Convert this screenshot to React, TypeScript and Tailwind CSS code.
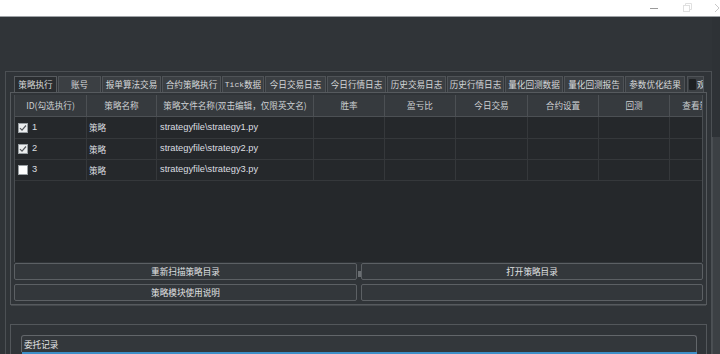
import React from "react";

const cjk = '"Noto Sans CJK SC", "Noto Sans", sans-serif';

const tabs = [
  { label: "策略执行", w: 43, active: true },
  { label: "账号", w: 43 },
  { label: "报单算法交易", w: 59 },
  { label: "合约策略执行", w: 59 },
  { label: "Tick数据", w: 42, mono: true },
  { label: "今日交易日志", w: 61 },
  { label: "今日行情日志", w: 59 },
  { label: "历史交易日志", w: 59 },
  { label: "历史行情日志", w: 57 },
  { label: "量化回测数据", w: 58 },
  { label: "量化回测报告", w: 60 },
  { label: "参数优化结果", w: 60 },
];

const columns = [
  { label: "ID(勾选执行)", w: 72 },
  { label: "策略名称", w: 70 },
  { label: "策略文件名称(双击编辑，仅限英文名)", w: 157 },
  { label: "胜率", w: 71 },
  { label: "盈亏比", w: 71 },
  { label: "今日交易", w: 72 },
  { label: "合约设置", w: 71 },
  { label: "回测", w: 71 },
  { label: "查看策略", w: 60 },
];

const rows = [
  { id: 1, checked: true, name: "策略", file: "strategyfile\\strategy1.py", h: "h-[22px]" },
  { id: 2, checked: true, name: "策略", file: "strategyfile\\strategy2.py", h: "h-[21px]" },
  { id: 3, checked: false, name: "策略", file: "strategyfile\\strategy3.py", h: "h-[21px]" },
];

const CheckBox = ({ checked }: { checked: boolean }) => (
  <span
    className={
      "w-[10px] h-[10px] flex items-center justify-center border border-[#9aa0a4] " +
      (checked ? "bg-[#eceeef]" : "bg-white")
    }
  >
    {checked && (
      <svg width="8" height="8" viewBox="0 0 8 8">
        <path d="M1 4.2 L3 6.2 L7 1.5" stroke="#55595d" strokeWidth="1.2" fill="none" />
      </svg>
    )}
  </span>
);

const Button = ({ label, className }: { label?: string; className: string }) => (
  <div
    className={
      "h-[17px] flex items-center justify-center rounded-[2px] border border-[#5c6064] bg-[#33373b] text-[#e2e4e6] text-[8.6px] " +
      className
    }
    style={{ fontFamily: cjk }}
  >
    {label}
  </div>
);

export default function App() {
  return (
    <div
      className="w-[720px] h-[354px] overflow-hidden bg-[#303438] flex flex-col"
      style={{ fontFamily: cjk }}
    >
      {/* TITLE BAR */}
      <div className="h-[16px] bg-white flex items-center justify-end shrink-0">
        <svg width="10" height="10" viewBox="0 0 10 10" className="mr-[23px]">
          <path d="M1 5.5 H9" stroke="#9a9a9a" strokeWidth="1" />
        </svg>
        <svg width="10" height="10" viewBox="0 0 10 10" className="mr-[22px]">
          <rect x="1.5" y="2.5" width="6" height="6" stroke="#e0e0e0" fill="none" />
          <path d="M3.5 2.5 V0.5 H9.5 V6.5 H7.5" stroke="#e0e0e0" fill="none" />
        </svg>
        <svg width="6" height="10" viewBox="0 0 6 10">
          <path d="M1 1 L5 5 L1 9" stroke="#c8c8c8" strokeWidth="1" fill="none" />
        </svg>
      </div>
      <div className="h-[1px] bg-[#9ea2a6] shrink-0" />

      <div className="flex flex-1 min-h-0">
        {/* MAIN AREA */}
        <div className="w-[712px] flex flex-col pl-[5px] pt-[54px]">
          <div className="flex-1 flex flex-col border-l border-t border-r border-[#4c5054] pl-[4px] pr-[4px] pt-[4px]">
            {/* TAB BAR */}
            <div className="h-[16px] flex gap-[1px] pl-[4px] shrink-0 overflow-hidden">
              {tabs.map((t) => (
                <div
                  key={t.label}
                  className={
                    "h-[16px] shrink-0 flex items-center justify-center border border-b-0 text-[8.6px] text-[#d6d8da] " +
                    (t.active ? "bg-[#2a2d30] border-[#575b5f]" : "bg-[#3b3f43] border-[#4f5357]")
                  }
                  style={{ width: t.w }}
                >
                  {t.mono ? (
                    <>
                      <span style={{ fontFamily: '"Liberation Mono", monospace' }} className="text-[8px]">
                        Tick
                      </span>
                      数据
                    </>
                  ) : (
                    t.label
                  )}
                </div>
              ))}
              <div className="ml-[1px] h-[16px] w-[17px] shrink-0 flex items-center bg-[#3b3f43] border border-b-0 border-[#4f5357] overflow-hidden">
                <span className="w-[7px] h-[11px] bg-[#1e2123] rounded-[1px] ml-[1px] shrink-0" />
                <span className="text-[8.6px] text-[#d6d8da] ml-[1px] whitespace-nowrap">观i</span>
              </div>
            </div>

            {/* TAB PANEL */}
            <div className="h-[213px] shrink-0 border border-[#565a5e] bg-[#303438] pl-[3px] pr-[3px] pt-[2px] flex flex-col shadow-[0_2px_0_-1px_#45494d]">
              {/* TABLE */}
              <div className="h-[167px] shrink-0 bg-[#25282b] border-l border-r border-[#4a4e52] overflow-hidden">
                <div className="h-[22px] flex bg-[#363a3e] border-b border-[#4c5054]">
                  {columns.map((c) => (
                    <div
                      key={c.label}
                      className="h-full shrink-0 flex items-center justify-center border-r border-[#4c5054] text-[8.6px] text-[#cdd0d3] whitespace-nowrap overflow-hidden"
                      style={{ width: c.w }}
                    >
                      {c.label}
                    </div>
                  ))}
                </div>
                {rows.map((r) => (
                  <div key={r.id} className={"flex border-b border-[#35383b] " + r.h}>
                    {columns.map((c, i) => (
                      <div
                        key={c.label}
                        className="h-full shrink-0 flex items-center border-r border-[#35383b] text-[#dcdee0] whitespace-nowrap overflow-hidden"
                        style={{ width: c.w }}
                      >
                        {i === 0 && (
                          <div className="flex items-center pl-[3px] gap-[4px]">
                            <CheckBox checked={r.checked} />
                            <span
                              className="text-[9.3px]"
                              style={{ fontFamily: '"Liberation Sans", Arial, sans-serif' }}
                            >
                              {r.id}
                            </span>
                          </div>
                        )}
                        {i === 1 && <span className="pl-[2px] text-[8.6px]">{r.name}</span>}
                        {i === 2 && (
                          <span
                            className="pl-[3px] text-[9.3px]"
                            style={{ fontFamily: '"Liberation Sans", Arial, sans-serif' }}
                          >
                            {r.file}
                          </span>
                        )}
                      </div>
                    ))}
                  </div>
                ))}
              </div>

              {/* BUTTONS */}
              <div className="mt-[1px] flex items-center h-[17px] shrink-0">
                <Button label="重新扫描策略目录" className="w-[343px]" />
                <div className="w-[4px] flex justify-center">
                  <span className="w-[3px] h-[6px] bg-[#6a6e72] mt-[4px]" />
                </div>
                <Button label="打开策略目录" className="flex-1" />
              </div>
              <div className="mt-[4px] flex h-[17px] shrink-0 gap-[4px]">
                <Button label="策略模块使用说明" className="w-[343px]" />
                <Button className="flex-1" />
              </div>
            </div>

            {/* ORDER RECORD GROUP */}
            <div className="mt-[19px] flex-1 border-l border-t border-r border-[#53575b] pt-[10px] pl-[10px] pr-[9px] flex flex-col">
              <div
                className="h-[17px] shrink-0 border border-b-0 border-[#62666a] rounded-t-[3px] bg-[#33373b] flex items-center pl-[2px] text-[8.6px] text-[#e4e6e8]"
              >
                委托记录
              </div>
              <div className="h-[2px] ml-[1px] bg-[#3d8fc8] shrink-0" />
            </div>
          </div>
        </div>

        {/* SCROLLBAR */}
        <div className="w-[8px] flex flex-col">
          <div className="h-[120px] bg-[#2e3236]" />
          <div className="flex-1 bg-[#3c4044] border-l border-[#4a4e52]" />
        </div>
      </div>
    </div>
  );
}
